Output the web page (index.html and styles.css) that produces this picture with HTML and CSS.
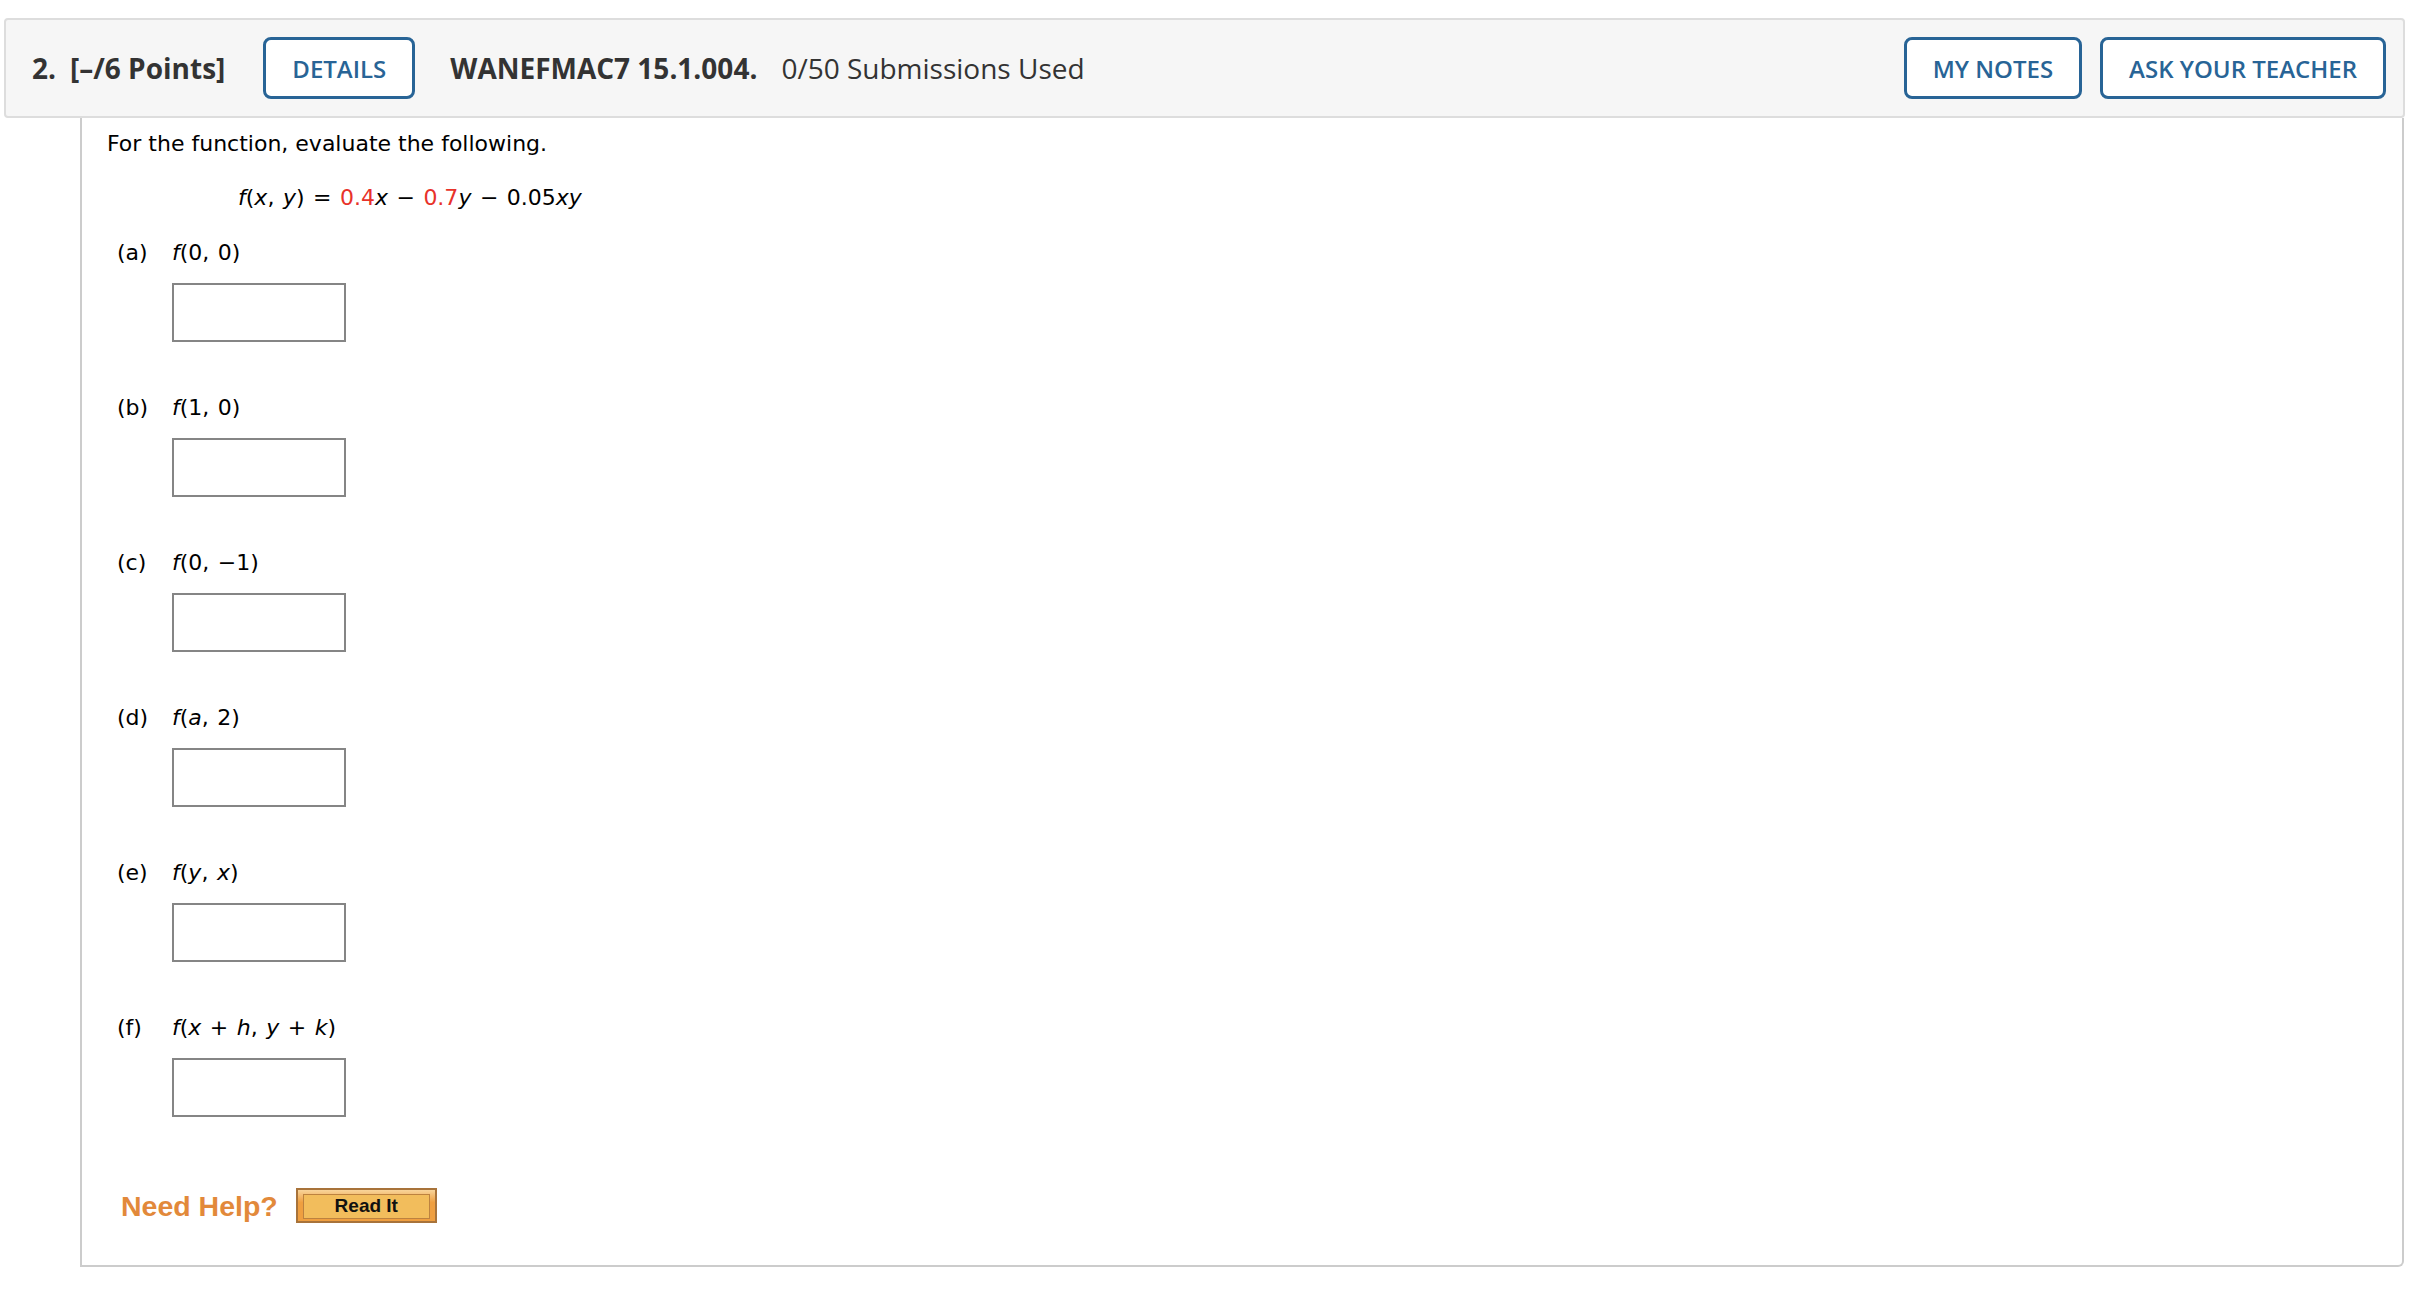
FILE: index.html
```html
<!DOCTYPE html>
<html>
<head>
    <title>WANEFMAC7 15.1.004</title>
    <link rel="stylesheet" href="styles.css">
</head>

<body>
    <div class="question">

        <div class="question-header">
            <span class="q-number">2.</span>
            <span class="q-points">[&ndash;/6 Points]</span>
            <button type="button" class="outline-btn details-btn">DETAILS</button>
            <span class="q-code">WANEFMAC7 15.1.004.</span>
            <span class="q-subs">0/50 Submissions Used</span>
            <div class="header-actions">
                <button type="button" class="outline-btn">MY NOTES</button>
                <button type="button" class="outline-btn">ASK YOUR TEACHER</button>
            </div>
        </div>

        <div class="question-body">
            <p class="intro">For the function, evaluate the following.</p>
            <p class="formula"><i>f</i>(<i>x</i>, <i>y</i>) = <span class="red">0.4</span><i>x</i> &minus; <span class="red">0.7</span><i>y</i> &minus; 0.05<i>xy</i></p>

            <div class="part">
                <div class="part-q"><span class="part-label">(a)</span><i>f</i>(0, 0)</div>
                <input type="text" class="answer">
            </div>
            <div class="part">
                <div class="part-q"><span class="part-label">(b)</span><i>f</i>(1, 0)</div>
                <input type="text" class="answer">
            </div>
            <div class="part">
                <div class="part-q"><span class="part-label">(c)</span><i>f</i>(0, &minus;1)</div>
                <input type="text" class="answer">
            </div>
            <div class="part">
                <div class="part-q"><span class="part-label">(d)</span><i>f</i>(<i>a</i>, 2)</div>
                <input type="text" class="answer">
            </div>
            <div class="part">
                <div class="part-q"><span class="part-label">(e)</span><i>f</i>(<i>y</i>, <i>x</i>)</div>
                <input type="text" class="answer">
            </div>
            <div class="part">
                <div class="part-q"><span class="part-label">(f)</span><i>f</i>(<i>x</i> + <i>h</i>, <i>y</i> + <i>k</i>)</div>
                <input type="text" class="answer">
            </div>

            <div class="help-row">
                <span class="need-help">Need Help?</span>
                <button type="button" class="read-it"><span>Read It</span></button>
            </div>
        </div>

    </div>
</body>
</html>
```

FILE: styles.css
```css
body {
    margin: 0;
    background: #fff;
    font-family: "DejaVu Sans", Verdana, sans-serif;
    color: #000;
}

.question {
    margin: 18px 5px 0 4px;
}

/* header bar */
.question-header {
    display: flex;
    align-items: center;
    height: 100px;
    box-sizing: border-box;
    padding: 0 17px 0 26px;
    background: #f6f6f6;
    border: 2px solid #dddddd;
    border-radius: 4px;
    font-family: "Open Sans", sans-serif;
    font-size: 28px;
    color: #333;
}

.q-number {
    font-weight: 700;
    margin-right: 14px;
}

.q-points {
    font-weight: 700;
}

.q-code {
    font-weight: 700;
    margin-left: 35px;
}

.q-subs {
    margin-left: 24px;
}

.outline-btn {
    height: 62px;
    box-sizing: border-box;
    padding: 0 26px;
    background: #fff;
    border: 3px solid #286496;
    border-radius: 8px;
    color: #286496;
    font-family: "Open Sans", sans-serif;
    font-size: 24px;
    font-weight: 600;
}

.details-btn {
    margin-left: 38px;
}

.header-actions {
    margin-left: auto;
    display: flex;
    gap: 18px;
}

/* question body */
.question-body {
    margin-left: 76px;
    margin-right: 1px;
    padding: 13px 0 42px 25px;
    border: 2px solid #cccccc;
    border-top: none;
    border-radius: 0 0 6px 0;
    font-size: 22px;
    line-height: 26px;
}

.intro {
    margin: 0;
}

.formula {
    margin: 28px 0 0 131px;
    word-spacing: 1.5px;
}

.part-q {
    word-spacing: 1.5px;
}

.red {
    color: #e8322a;
}

.part {
    margin-top: 53px;
    padding-left: 10px;
}

.formula + .part {
    margin-top: 29px;
}

.part-label {
    display: inline-block;
    width: 55px;
}

.answer {
    display: block;
    margin: 17px 0 0 55px;
    width: 174px;
    height: 59px;
    box-sizing: border-box;
    border: 2px solid #858585;
    background: #fff;
}

/* help */
.help-row {
    display: flex;
    align-items: center;
    margin-top: 71px;
    padding-left: 14px;
}

.need-help {
    font-family: "Liberation Sans", Arial, sans-serif;
    font-weight: 700;
    font-size: 28.5px;
    color: #e2893a;
}

.read-it {
    margin-left: 18px;
    padding: 4px 5px;
    width: 141px;
    height: 35px;
    box-sizing: border-box;
    border: 2px solid #a8733a;
    background: linear-gradient(#f8d49a, #ef9f40 40%);
}

.read-it span {
    display: block;
    height: 23px;
    border: 1px solid #bd823f;
    background: #f2bd5c;
    font-family: "Liberation Sans", Arial, sans-serif;
    font-weight: 700;
    font-size: 19px;
    line-height: 22px;
    color: #111;
}
```
